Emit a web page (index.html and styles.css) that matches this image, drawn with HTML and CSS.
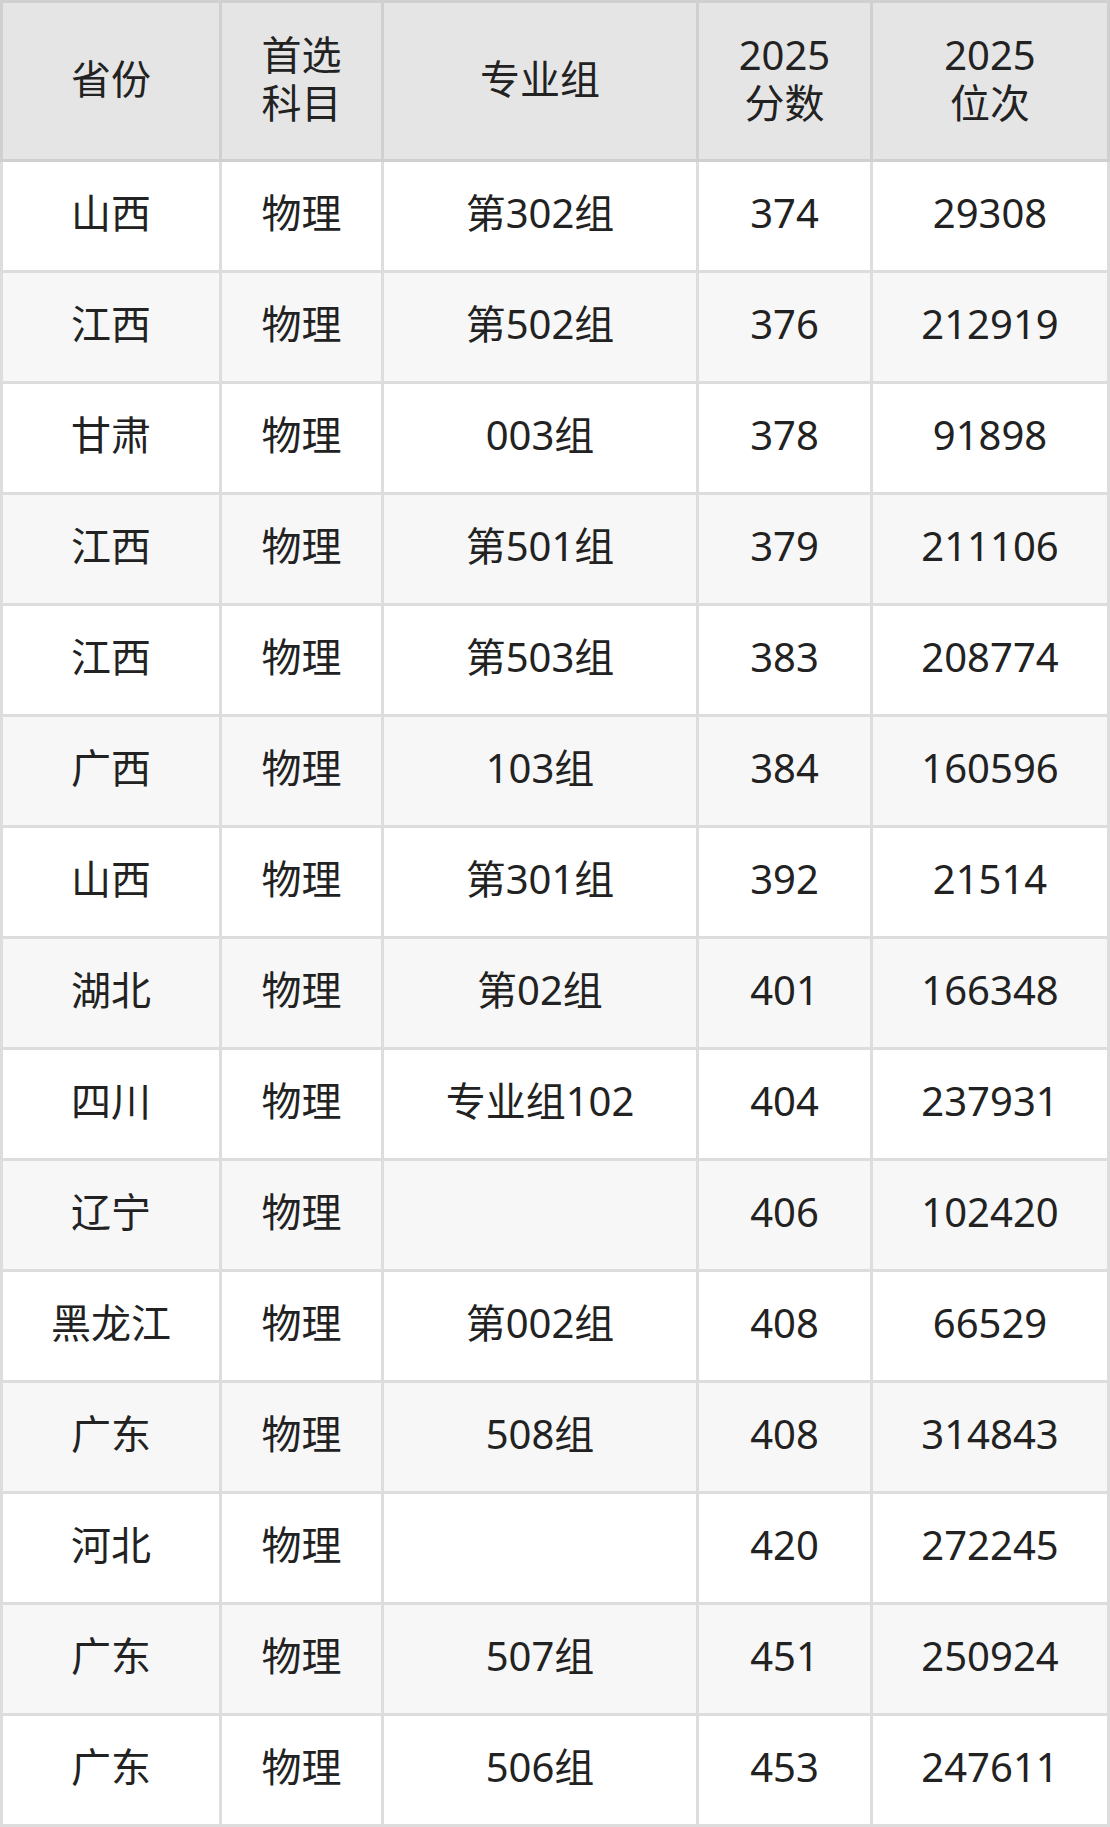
FILE: index.html
```html
<!DOCTYPE html>
<html lang="zh-CN">
<head>
<meta charset="utf-8">
<title>分数线</title>
<link rel="stylesheet" href="styles.css">
</head>
<body>
<div class="table">
  <div class="head row">
    <div class="cell">省份</div>
    <div class="cell">首选<br>科目</div>
    <div class="cell">专业组</div>
    <div class="cell">2025<br>分数</div>
    <div class="cell">2025<br>位次</div>
  </div>
  <div class="body">
    <div class="row"><div class="cell">山西</div><div class="cell">物理</div><div class="cell">第302组</div><div class="cell">374</div><div class="cell">29308</div></div>
    <div class="row alt"><div class="cell">江西</div><div class="cell">物理</div><div class="cell">第502组</div><div class="cell">376</div><div class="cell">212919</div></div>
    <div class="row"><div class="cell">甘肃</div><div class="cell">物理</div><div class="cell">003组</div><div class="cell">378</div><div class="cell">91898</div></div>
    <div class="row alt"><div class="cell">江西</div><div class="cell">物理</div><div class="cell">第501组</div><div class="cell">379</div><div class="cell">211106</div></div>
    <div class="row"><div class="cell">江西</div><div class="cell">物理</div><div class="cell">第503组</div><div class="cell">383</div><div class="cell">208774</div></div>
    <div class="row alt"><div class="cell">广西</div><div class="cell">物理</div><div class="cell">103组</div><div class="cell">384</div><div class="cell">160596</div></div>
    <div class="row"><div class="cell">山西</div><div class="cell">物理</div><div class="cell">第301组</div><div class="cell">392</div><div class="cell">21514</div></div>
    <div class="row alt"><div class="cell">湖北</div><div class="cell">物理</div><div class="cell">第02组</div><div class="cell">401</div><div class="cell">166348</div></div>
    <div class="row"><div class="cell">四川</div><div class="cell">物理</div><div class="cell">专业组102</div><div class="cell">404</div><div class="cell">237931</div></div>
    <div class="row alt"><div class="cell">辽宁</div><div class="cell">物理</div><div class="cell"></div><div class="cell">406</div><div class="cell">102420</div></div>
    <div class="row"><div class="cell">黑龙江</div><div class="cell">物理</div><div class="cell">第002组</div><div class="cell">408</div><div class="cell">66529</div></div>
    <div class="row alt"><div class="cell">广东</div><div class="cell">物理</div><div class="cell">508组</div><div class="cell">408</div><div class="cell">314843</div></div>
    <div class="row"><div class="cell">河北</div><div class="cell">物理</div><div class="cell"></div><div class="cell">420</div><div class="cell">272245</div></div>
    <div class="row alt"><div class="cell">广东</div><div class="cell">物理</div><div class="cell">507组</div><div class="cell">451</div><div class="cell">250924</div></div>
    <div class="row"><div class="cell">广东</div><div class="cell">物理</div><div class="cell">506组</div><div class="cell">453</div><div class="cell">247611</div></div>
  </div>
</div>
</body>
</html>
```
FILE: styles.css
```css
html, body {
  margin: 0;
  padding: 0;
  background: #ffffff;
}
.table {
  width: 1110px;
  font-family: "Noto Sans", "Noto Sans CJK SC", sans-serif;
  font-size: 40px;
  color: #222222;
}
.row {
  display: grid;
  grid-template-columns: 216px 159px 312px 171px 234px;
  column-gap: 3px;
}
.head {
  background: #d0d0d0;
  padding: 3px;
}
.head .cell {
  background: #e5e5e5;
  height: 156px;
  line-height: 48px;
  padding-bottom: 4px;
  box-sizing: border-box;
}
.body {
  display: flex;
  flex-direction: column;
  gap: 3px;
  background: #dddddd;
  padding: 0 3px 3px;
}
.body .cell {
  background: #ffffff;
  height: 108px;
  line-height: 48px;
  padding-bottom: 6px;
  box-sizing: border-box;
}
.body .alt .cell {
  background: #f7f7f7;
}
.cell {
  display: flex;
  align-items: center;
  justify-content: center;
  text-align: center;
}
```
